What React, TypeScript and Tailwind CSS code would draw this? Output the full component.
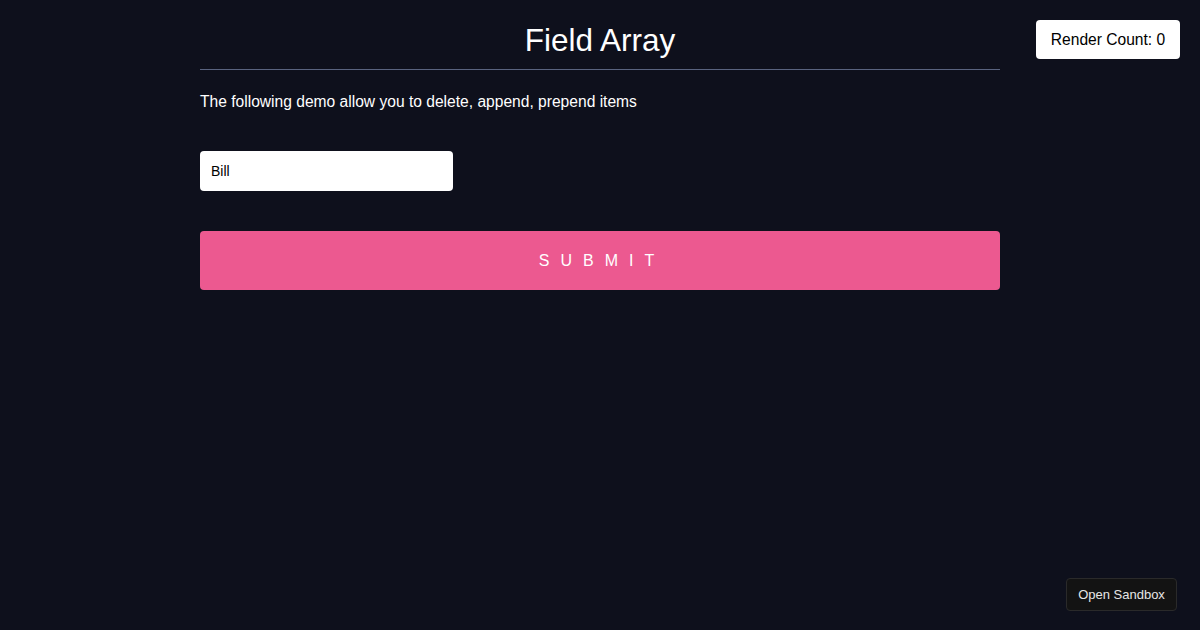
export default function App() {
  return (
    <div className="relative min-h-[630px] w-full bg-[#0e101c] font-['Liberation_Sans',Arial,sans-serif] text-white">
      <div className="absolute right-[20px] top-[20px] flex h-[39px] w-[144px] items-center justify-center rounded bg-white text-[15.6px] text-black">
        Render Count: 0
      </div>

      <div className="mx-auto w-[800px]">
        <h1 className="pt-[20px] pb-[9px] text-center text-[31.5px] leading-[40px] font-normal">Field Array</h1>
        <div className="h-px bg-[#59637f]" />
        <p className="mt-[22px] text-[15.6px] leading-[20px]">
          The following demo allow you to delete, append, prepend items
        </p>

        <form className="mt-[39px]" onSubmit={(e) => e.preventDefault()}>
          <input
            defaultValue="Bill"
            className="block h-[40px] w-[253px] rounded bg-white px-[11px] text-[14px] text-black outline-none"
          />
          <button
            type="submit"
            className="mt-[40px] flex h-[59px] w-full items-center justify-center rounded bg-[#ec5990] pl-[4px] text-[16px] tracking-[11px] text-white"
          >
            SUBMIT
          </button>
        </form>
      </div>

      <button className="absolute bottom-[19px] right-[23px] h-[33px] w-[111px] rounded border border-[#2a2a2a] bg-[#131313] text-[13px] text-[#e6e6e6]">
        Open Sandbox
      </button>
    </div>
  );
}
